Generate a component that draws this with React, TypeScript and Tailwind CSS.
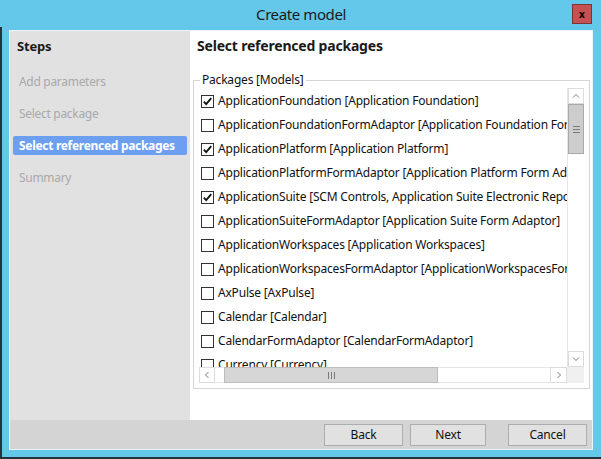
import React from "react";

const FONT = { fontFamily: '"Noto Sans", "Open Sans", sans-serif' };

const rows: { checked: boolean; label: string }[] = [
  { checked: true, label: "ApplicationFoundation [Application Foundation]" },
  { checked: false, label: "ApplicationFoundationFormAdaptor [Application Foundation FormAdaptor]" },
  { checked: true, label: "ApplicationPlatform [Application Platform]" },
  { checked: false, label: "ApplicationPlatformFormAdaptor [Application Platform Form Adaptor]" },
  { checked: true, label: "ApplicationSuite [SCM Controls, Application Suite Electronic Reporting Integration]" },
  { checked: false, label: "ApplicationSuiteFormAdaptor [Application Suite Form Adaptor]" },
  { checked: false, label: "ApplicationWorkspaces [Application Workspaces]" },
  { checked: false, label: "ApplicationWorkspacesFormAdaptor [ApplicationWorkspacesFormAdaptor]" },
  { checked: false, label: "AxPulse [AxPulse]" },
  { checked: false, label: "Calendar [Calendar]" },
  { checked: false, label: "CalendarFormAdaptor [CalendarFormAdaptor]" },
  { checked: false, label: "Currency [Currency]" },
];

function CheckBox({ checked }: { checked: boolean }) {
  return (
    <div className="w-[13px] h-[13px] border border-[#333333] bg-white flex items-center justify-center shrink-0">
      {checked && (
        <svg width="11" height="11" viewBox="0 0 11 11">
          <polyline points="1.8,5.6 4.2,8.2 9.2,2.2" fill="none" stroke="#111" strokeWidth="1.8" />
        </svg>
      )}
    </div>
  );
}

function Chevron({ dir }: { dir: "up" | "down" | "left" | "right" }) {
  const pts = {
    up: "1,5.5 4,2.5 7,5.5",
    down: "1,2.5 4,5.5 7,2.5",
    left: "5.5,1 2.5,4 5.5,7",
    right: "2.5,1 5.5,4 2.5,7",
  }[dir];
  return (
    <svg width="8" height="8" viewBox="0 0 8 8">
      <polyline points={pts} fill="none" stroke="#7a7a7a" strokeWidth="1" />
    </svg>
  );
}

function Button({ label, w }: { label: string; w: string }) {
  return (
    <div
      className={`${w} h-[22px] border border-[#adadad] bg-[#e1e1e1] flex items-center justify-center text-[12px] text-[#111] tracking-[-0.2px]`}
    >
      {label}
    </div>
  );
}

export default function App() {
  return (
    <div
      className="w-[601px] h-[459px] pl-[2px] pb-[2px] bg-[linear-gradient(to_bottom,#63c8e9_27px,#26333a_27px)] overflow-hidden"
      style={FONT}
    >
      <div className="h-full bg-[#63c8e9] flex flex-col pl-[7px] pr-[8px] pb-[7px]">
        {/* Title bar */}
        <div className="h-[30px] grid grid-cols-[20px_1fr_20px]">
          <div />
          <div className="flex items-center justify-center text-[15px] text-[#1a1a1a] tracking-[-0.4px] pb-[2px]">
            Create model
          </div>
          <div className="mt-[4px] w-[20px] h-[20px] bg-[#c75050] border border-[#7d3434] flex items-center justify-center text-[10px] font-bold leading-none text-black -translate-x-[1px]">
            x
          </div>
        </div>

        {/* Content */}
        <div className="flex-1 border border-[#eaf5f9] flex flex-col">
          <div className="flex-1 flex">
            {/* Steps panel */}
            <div className="w-[180px] bg-[#e1e1e1] pt-[6px]">
              <div className="pl-[7px] h-[18px] leading-[18px] text-[13px] font-bold text-[#1a1a1a] tracking-[-0.2px]">
                Steps
              </div>
              <div className="px-[3px] mt-[17px] flex flex-col gap-[13px]">
                <div className="h-[19px] pl-[6px] flex items-center text-[12px] text-[#a9a9a9] tracking-[-0.3px]">
                  Add parameters
                </div>
                <div className="h-[19px] pl-[6px] flex items-center text-[12px] text-[#a9a9a9] tracking-[-0.3px]">
                  Select package
                </div>
                <div className="h-[19px] pl-[6px] flex items-center text-[12px] font-bold text-white bg-[#6c9ff0] rounded-[2px] tracking-[-0.3px]">
                  Select referenced packages
                </div>
                <div className="h-[19px] pl-[6px] flex items-center text-[12px] text-[#a9a9a9] tracking-[-0.3px]">
                  Summary
                </div>
              </div>
            </div>

            {/* Main panel */}
            <div className="flex-1 bg-white pt-[6px]">
              <div className="pl-[7px] h-[18px] leading-[18px] text-[14px] font-bold text-[#1a1a1a] tracking-[-0.2px]">
                Select referenced packages
              </div>
              <div className="relative mt-[25px] ml-[3px] mr-[2px] h-[309px] border border-[#d5d5d5] pt-[7px] pl-[5px] pr-[5px]">
                <div className="absolute -top-[9px] left-[6px] bg-white px-[2px] text-[12px] leading-[16px] text-[#111] tracking-[-0.2px]">
                  Packages [Models]
                </div>
                <div className="h-[295px] grid grid-cols-[368px_17px] grid-rows-[279px_16px]">
                  {/* Viewport */}
                  <div className="overflow-hidden pt-[1px]">
                    {rows.map((r, i) => (
                      <div key={i} className="h-[24px] flex items-center pl-[2px] gap-[4px] whitespace-nowrap text-[12px] text-[#111] tracking-[-0.2px]">
                        <CheckBox checked={r.checked} />
                        <span>{r.label}</span>
                      </div>
                    ))}
                  </div>
                  {/* Vertical scrollbar */}
                  <div className="flex flex-col bg-white border-l border-[#e6e6e6]">
                    <div className="h-[16px] border border-[#dcdcdc] flex items-center justify-center">
                      <Chevron dir="up" />
                    </div>
                    <div className="h-[50px] bg-[#cdcdcd] border border-[#a9a9a9] flex flex-col items-center justify-center gap-[2px]">
                      <div className="w-[7px] h-[1px] bg-[#7a7a7a]" />
                      <div className="w-[7px] h-[1px] bg-[#7a7a7a]" />
                      <div className="w-[7px] h-[1px] bg-[#7a7a7a]" />
                    </div>
                    <div className="flex-1" />
                    <div className="h-[16px] border border-[#dcdcdc] flex items-center justify-center">
                      <Chevron dir="down" />
                    </div>
                  </div>
                  {/* Horizontal scrollbar */}
                  <div className="flex bg-white">
                    <div className="w-[16px] border border-[#dcdcdc] flex items-center justify-center">
                      <Chevron dir="left" />
                    </div>
                    <div className="w-[9px] border-y border-[#e6e6e6]" />
                    <div className="w-[214px] bg-[#d6d6d6] border border-[#bdbdbd] flex items-center justify-center gap-[2px]">
                      <div className="w-[1px] h-[7px] bg-[#7a7a7a]" />
                      <div className="w-[1px] h-[7px] bg-[#7a7a7a]" />
                      <div className="w-[1px] h-[7px] bg-[#7a7a7a]" />
                    </div>
                    <div className="flex-1 border-y border-[#e6e6e6]" />
                    <div className="w-[17px] border border-[#dcdcdc] flex items-center justify-center">
                      <Chevron dir="right" />
                    </div>
                  </div>
                  <div className="bg-[#f0f0f0]" />
                </div>
              </div>
            </div>
          </div>

          {/* Footer */}
          <div className="h-[29px] bg-[#d4d4d4] flex justify-end items-start pt-[4px] pr-[5px]">
            <Button label="Back" w="w-[79px]" />
            <div className="w-[7px]" />
            <Button label="Next" w="w-[76px]" />
            <div className="w-[22px]" />
            <Button label="Cancel" w="w-[79px]" />
          </div>
        </div>
      </div>
    </div>
  );
}
